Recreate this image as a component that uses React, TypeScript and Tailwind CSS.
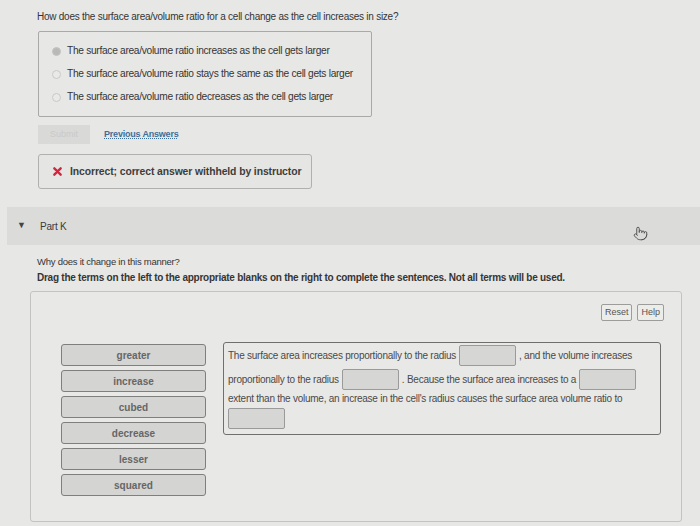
import { Pointer } from "lucide-react";

const terms = ["greater", "increase", "cubed", "decrease", "lesser", "squared"];

const options = [
  { label: "The surface area/volume ratio increases as the cell gets larger", picked: true },
  { label: "The surface area/volume ratio stays the same as the cell gets larger", picked: false },
  { label: "The surface area/volume ratio decreases as the cell gets larger", picked: false },
];

const Blank = () => (
  <span className="inline-block w-[57px] h-[21px] border border-[#9a9a9a] rounded-[2px] bg-[#d6d6d5] shrink-0" />
);

export default function App() {
  return (
    <div
      className="w-[700px] h-[526px] overflow-hidden bg-[#e7e7e5] text-[#353535]"
      style={{ fontFamily: '"Liberation Sans", Arial, sans-serif' }}
    >
      {/* previous part */}
      <div className="pl-[37px] pt-[11px]">
        <p className="text-[10px] leading-[12px] tracking-[-0.25px]">
          How does the surface area/volume ratio for a cell change as the cell increases in size?
        </p>

        <div className="mt-[8px] ml-[1px] w-[334px] h-[86px] border border-[#a9a9a7] rounded-[2px] pl-[13px] pt-[13px] flex flex-col gap-[11px]">
          {options.map((o) => (
            <div key={o.label} className="flex items-center gap-[6px] h-[12px]">
              <span
                className={
                  o.picked
                    ? "w-[9px] h-[9px] rounded-full bg-[#b9b9b8] border border-[#c4c4c2]"
                    : "w-[9px] h-[9px] rounded-full bg-[#e9e9e7] border border-[#c9c9c7]"
                }
              />
              <span className="text-[10.2px] leading-[12px] tracking-[-0.3px]">{o.label}</span>
            </div>
          ))}
        </div>

        <div className="mt-[8px] ml-[1px] flex items-center">
          <button className="w-[52px] h-[19px] bg-[#d9d9d8] text-[9px] text-[#c9c9c8]">Submit</button>
          <a className="ml-[14px] text-[9px] font-bold text-[#3f6f9c] underline decoration-dotted tracking-[-0.2px]">
            Previous Answers
          </a>
        </div>

        <div className="mt-[10px] ml-[1px] w-[274px] h-[35px] border border-[#b0b0ae] rounded-[3px] bg-[#e5e5e3] flex items-center pl-[14px] gap-[8px]">
          <svg width="9" height="9" viewBox="0 0 10 10">
            <path d="M1.5 1.5 L8.5 8.5 M8.5 1.5 L1.5 8.5" stroke="#d1263d" strokeWidth="2.6" strokeLinecap="round" />
          </svg>
          <span className="text-[10.4px] font-bold text-[#3d3d3d] tracking-[-0.1px]">
            Incorrect; correct answer withheld by instructor
          </span>
        </div>
      </div>

      {/* part header */}
      <div className="mt-[18px] ml-[7px] h-[38px] bg-[#dbdcda] flex items-center">
        <span className="ml-[10px] text-[9px] text-[#444]">▼</span>
        <span className="ml-[14px] text-[10px] text-[#3a3a3a] tracking-[-0.2px]">Part K</span>
        <Pointer className="ml-auto mr-[52px] mt-[14px] w-[15px] h-[15px] text-[#555]" strokeWidth={1.6} />
      </div>

      <div className="pl-[37px]">
        <p className="mt-[11px] text-[9.5px] leading-[12px] tracking-[-0.25px]">Why does it change in this manner?</p>
        <p className="mt-[4px] text-[10px] leading-[12px] font-bold tracking-[-0.25px]">
          Drag the terms on the left to the appropriate blanks on the right to complete the sentences. Not all terms will be used.
        </p>
      </div>

      {/* drag and drop area */}
      <div className="mt-[7px] ml-[30px] w-[652px] h-[231px] border border-[#c3c3c1] rounded-[3px] bg-[#e8e8e6]">
        <div className="flex justify-end gap-[5px] pr-[17px] pt-[12px]">
          <button className="h-[17px] px-[3px] border border-[#9c9c9a] rounded-[2px] bg-[#ecece9] text-[9px] text-[#555]">Reset</button>
          <button className="h-[17px] px-[3px] border border-[#9c9c9a] rounded-[2px] bg-[#ecece9] text-[9px] text-[#555]">Help</button>
        </div>

        <div className="flex mt-[21px] pl-[30px]">
          <div className="flex flex-col gap-[4px] w-[145px] pt-[2px]">
            {terms.map((t) => (
              <div
                key={t}
                className="h-[22px] border border-[#7f7f7e] rounded-[3px] bg-[#d4d4d3] flex items-center justify-center text-[10px] font-bold text-[#666665]"
              >
                {t}
              </div>
            ))}
          </div>

          <div className="ml-[17px] w-[438px] h-[93px] border border-[#6f6f6e] rounded-[3px] pl-[4px] pt-[2px] text-[10px] tracking-[-0.25px] text-[#4a4a4a]">
            <div className="flex items-center gap-[3px] h-[21px]">
              <span>The surface area increases proportionally to the radius</span>
              <Blank />
              <span>, and the volume increases</span>
            </div>
            <div className="flex items-center gap-[3px] h-[21px] mt-[3px]">
              <span>proportionally to the radius</span>
              <Blank />
              <span>. Because the surface area increases to a</span>
              <Blank />
            </div>
            <div className="flex items-center h-[17px]">
              <span>extent than the volume, an increase in the cell's radius causes the surface area volume ratio to</span>
            </div>
            <div className="flex items-center h-[21px] mt-[1px]">
              <Blank />
            </div>
          </div>
        </div>
      </div>
    </div>
  );
}
